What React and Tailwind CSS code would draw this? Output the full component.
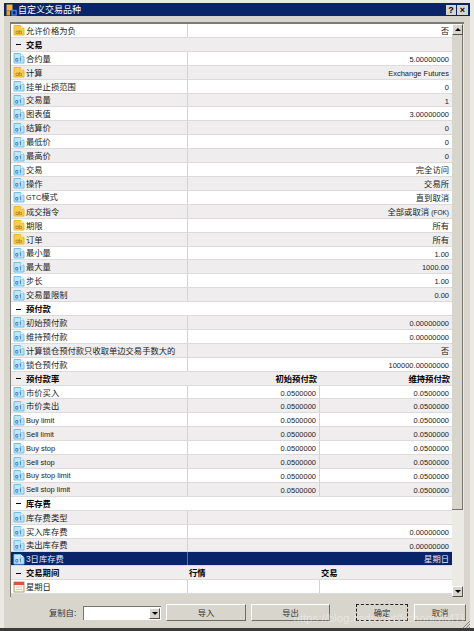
const cjk = '"Liberation Sans", "Noto Sans CJK SC", sans-serif';

const FileIcon = ({ kind }) => {
  if (kind === 'ab') {
    return (
      <svg width="12" height="12" viewBox="0 0 12 12" className="shrink-0">
        <path d="M1 1.5h6.5L11 4.5v6.5H1z" fill="#f8cf4a" stroke="#ecb52a" strokeWidth="1" />
        <path d="M7.5 1.5v3H11" fill="#fdeeb0" stroke="#ecb52a" strokeWidth="0.6" />
        <path d="M3 9.5V7.2h2.4v2.3zM6.4 6v3.5h2.2V7.4H6.4" fill="none" stroke="#b08226" strokeWidth="0.8" />
      </svg>
    );
  }
  if (kind === 'cal') {
    return (
      <svg width="12" height="12" viewBox="0 0 12 12" className="shrink-0">
        <rect x="1" y="1" width="10" height="10" fill="#fbf3e6" stroke="#b09880" strokeWidth="1" />
        <rect x="1" y="1" width="10" height="3" fill="#d8553a" />
        <path d="M3 6h6M3 8.5h6" stroke="#d9c7ae" strokeWidth="1" />
      </svg>
    );
  }
  return (
    <svg width="12" height="12" viewBox="0 0 12 12" className="shrink-0">
      <path d="M1 1.5h6.5L11 4.5v6.5H1z" fill="#bfe6fb" stroke="#6fbfec" strokeWidth="1" />
      <path d="M7.5 1.5v3H11" fill="#ffffff" stroke="#6fbfec" strokeWidth="0.6" />
      <path d="M2.8 6.5h2v2.6h-2zM6.6 6.2l1-.5v3.6" fill="none" stroke="#3a7dbd" strokeWidth="0.9" />
    </svg>
  );
};

const rows = [
  { icon: 'ab', label: '允许价格为负', value: '否' },
  { group: '交易' },
  { icon: 'num', label: '合约量', value: '5.00000000' },
  { icon: 'ab', label: '计算', value: 'Exchange Futures' },
  { icon: 'num', label: '挂单止损范围', value: '0' },
  { icon: 'num', label: '交易量', value: '1' },
  { icon: 'num', label: '图表值', value: '3.00000000' },
  { icon: 'num', label: '结算价', value: '0' },
  { icon: 'num', label: '最低价', value: '0' },
  { icon: 'num', label: '最高价', value: '0' },
  { icon: 'num', label: '交易', value: '完全访问' },
  { icon: 'num', label: '操作', value: '交易所' },
  { icon: 'num', label: <><span className="text-[7.2px]">GTC</span>模式</>, value: '直到取消' },
  { icon: 'ab', label: '成交指令', value: <>全部或取消 <span className="text-[6.5px]">(FOK)</span></> },
  { icon: 'ab', label: '期限', value: '所有' },
  { icon: 'ab', label: '订单', value: '所有' },
  { icon: 'num', label: '最小量', value: '1.00' },
  { icon: 'num', label: '最大量', value: '1000.00' },
  { icon: 'num', label: '步长', value: '1.00' },
  { icon: 'num', label: '交易量限制', value: '0.00' },
  { group: '预付款' },
  { icon: 'num', label: '初始预付款', value: '0.00000000' },
  { icon: 'num', label: '维持预付款', value: '0.00000000' },
  { icon: 'num', label: '计算锁仓预付款只收取单边交易手数大的', value: '否' },
  { icon: 'num', label: '锁仓预付款', value: '100000.00000000' },
  { group: '预付款率', mid: '初始预付款', right: '维持预付款', align: 'right' },
  { icon: 'num', label: '市价买入', mid: '0.0500000', right: '0.0500000' },
  { icon: 'num', label: '市价卖出', mid: '0.0500000', right: '0.0500000' },
  { icon: 'num', label: 'Buy limit', mid: '0.0500000', right: '0.0500000' },
  { icon: 'num', label: 'Sell limit', mid: '0.0500000', right: '0.0500000' },
  { icon: 'num', label: 'Buy stop', mid: '0.0500000', right: '0.0500000' },
  { icon: 'num', label: 'Sell stop', mid: '0.0500000', right: '0.0500000' },
  { icon: 'num', label: 'Buy stop limit', mid: '0.0500000', right: '0.0500000' },
  { icon: 'num', label: 'Sell stop limit', mid: '0.0500000', right: '0.0500000' },
  { group: '库存费' },
  { icon: 'num', label: '库存费类型', value: '' },
  { icon: 'num', label: '买入库存费', value: '0.00000000' },
  { icon: 'num', label: '卖出库存费', value: '0.00000000' },
  { icon: 'num', label: '3日库存费', value: '星期日', selected: true },
  { group: '交易期间', mid: '行情', right: '交易', align: 'left' },
  { icon: 'cal', label: '星期日', mid: '', right: '' },
];

// latin text in the original is set smaller than the chinese text
const isLatin = (text) => typeof text === 'string' && /^[\x20-\x7e]+$/.test(text);
const Txt = ({ children }) => <span className={isLatin(children) ? 'text-[7.5px]' : ''}>{children}</span>;

function Row({ row, index }) {
  const stripe = index % 2 === 1 ? 'bg-[#efedee]' : 'bg-white';

  if (row.group) {
    const aligned = row.align === 'right' ? 'justify-end' : 'justify-start';
    return (
      <div className={`flex h-[13.92px] shrink-0 items-center border-b border-[#dcdadb] pt-[1px] font-bold text-black ${stripe}`}>
        <div className="flex w-[176px] shrink-0 items-center">
          <span className="ml-[5px] h-[1px] w-[5px] bg-black" />
          <span className="ml-[5px]">{row.group}</span>
        </div>
        {row.mid !== undefined && (
          <>
            <div className={`flex w-[132px] shrink-0 px-[2px] ${aligned}`}>{row.mid}</div>
            <div className={`flex flex-1 px-[2px] ${aligned}`}>{row.right}</div>
          </>
        )}
      </div>
    );
  }

  const tone = row.selected ? 'bg-[#0a246a] text-[#e4eaf8]' : `${stripe} text-[#222]`;
  const divider = row.selected ? 'border-[#5a6ea0]' : 'border-[#d4d2d3]';

  return (
    <div className={`flex h-[13.92px] shrink-0 items-stretch border-b border-[#dcdadb] ${tone}`}>
      <div className="flex w-[176px] shrink-0 items-center gap-[1px] pl-[2px] whitespace-nowrap">
        <FileIcon kind={row.icon} />
        <span className="pt-[1px]"><Txt>{row.label}</Txt></span>
      </div>
      {row.mid !== undefined ? (
        <>
          <div className={`w-[132px] shrink-0 border-l pt-[1px] pr-[3px] text-right ${divider}`}><Txt>{row.mid}</Txt></div>
          <div className={`flex-1 border-l pt-[1px] pr-[3px] text-right ${divider}`}><Txt>{row.right}</Txt></div>
        </>
      ) : (
        <div className={`flex-1 border-l pt-[1px] pr-[3px] text-right ${divider}`}><Txt>{row.value}</Txt></div>
      )}
    </div>
  );
}

const Btn = ({ className, children }) => (
  <button className={`flex h-[17px] items-center justify-center border-t border-l border-t-white border-l-white border-r border-b border-r-[#6f6c65] border-b-[#6f6c65] bg-[#d8d5cc] text-[#333] ${className}`}>
    {children}
  </button>
);

const ArrowBox = ({ up }) => (
  <div className="flex h-[11px] w-[11px] shrink-0 items-center justify-center border-t border-l border-t-white border-l-white border-r border-b border-r-[#55534d] border-b-[#55534d] bg-[#d8d5cc]">
    <span className={`h-0 w-0 border-x-[3px] border-x-transparent ${up ? 'border-b-[3px] border-b-black' : 'border-t-[3px] border-t-black'}`} />
  </div>
);

export default function App() {
  return (
    <div className="relative h-[631px] w-[474px] overflow-hidden bg-[#ebe9e3] px-[4px] pt-[3px] text-[8.3px] leading-[12px]" style={{ fontFamily: cjk }}>
      <div className="flex h-[625px] flex-col bg-[#d8d5cc]">
        <div className="flex h-[13px] shrink-0 items-center justify-between bg-[#0a246a] pr-[2px] pl-[2px]">
          <div className="flex items-center gap-[1px]">
            <svg width="11" height="12" viewBox="0 0 11 12">
              <rect x="0.5" y="0.5" width="6" height="6" fill="#f4b73a" />
              <rect x="0.5" y="6.5" width="3.5" height="5" fill="#e9a02a" />
              <rect x="6" y="6.5" width="4.2" height="4.5" fill="none" stroke="#3f86d8" strokeWidth="1.4" />
            </svg>
            <span className="text-[9px] text-white">自定义交易品种</span>
          </div>
          <div className="flex gap-[1px]">
            <div className="flex h-[10px] w-[10px] items-center justify-center bg-[#d8d5cc] text-[9px] font-bold text-black">?</div>
            <div className="flex h-[10px] w-[11px] items-center justify-center bg-[#d8d5cc] text-[9px] font-bold text-black">×</div>
          </div>
        </div>

        <div className="mx-[6px] mt-[6px] flex h-[575px] shrink-0 border-t-2 border-l border-t-[#7f7c75] border-l-[#7f7c75]">
          <div className="flex w-[441px] shrink-0 flex-col overflow-hidden">
            {rows.map((row, i) => (
              <Row key={i} row={row} index={i} />
            ))}
          </div>
          <div className="flex w-[12px] flex-col bg-[#eceae4]">
            <ArrowBox up />
            <div className="h-[475px] w-[11px] border-r border-b border-r-[#77746d] border-b-[#77746d] bg-[#d8d5cc]" />
            <div className="flex-1" />
            <ArrowBox />
          </div>
        </div>

        <div className="mt-[7px] flex items-center pl-[45px]">
          <span className="w-[34px] text-[#333]">复制自:</span>
          <div className="flex h-[14px] w-[78px] items-center justify-end border-t border-l border-[#77746d] bg-white pr-[1px]">
            <ArrowBox />
          </div>
          <Btn className="ml-[5px] w-[80px]">导入</Btn>
          <Btn className="ml-[5px] w-[79px]">导出</Btn>
          <Btn className="ml-[26px] w-[52px] border-dashed !border-[#222]">确定</Btn>
          <Btn className="ml-[6px] w-[52px]">取消</Btn>
        </div>
      </div>

      <div className="absolute right-[10px] bottom-[7px] text-[11.5px] whitespace-nowrap text-white/40" style={{ fontFamily: '"Liberation Sans", sans-serif' }}>
        https://blog.csdn.net/SchoolMMTI
      </div>
      <svg width="8" height="8" viewBox="0 0 8 8" className="absolute right-[4px] bottom-[3px]">
        <path d="M1 8l7-7M4 8l4-4M7 8l1-1" stroke="#8a8780" strokeWidth="1" />
      </svg>
      <div className="absolute inset-x-0 bottom-0 h-[3px] bg-[#3a3a3a]" />
    </div>
  );
}
